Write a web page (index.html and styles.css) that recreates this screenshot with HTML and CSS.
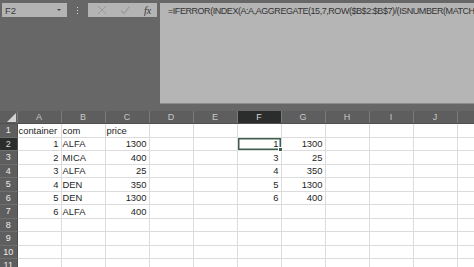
FILE: index.html
```html
<!DOCTYPE html>
<html lang="en">
<head>
<meta charset="UTF-8" />
<title>Sheet</title>
<link rel="stylesheet" href="styles.css">
</head>
<body>
  <div class="formula-area">
    <div class="name-box">
      <span>F2</span>
      <span class="drop"></span>
    </div>
    <div class="grip"><i></i><i></i><i></i></div>
    <div class="fx-box">
      <svg width="10" height="10" viewBox="0 0 10 10"><path d="M1 1 L9 9 M9 1 L1 9" stroke="#999" stroke-width="1" fill="none"/></svg>
      <svg width="10" height="10" viewBox="0 0 10 10"><path d="M1 5.5 L4 8.5 L9.5 1.5" stroke="#999" stroke-width="1.2" fill="none"/></svg>
      <span class="fx">fx</span>
    </div>
    <div class="formula-box">=IFERROR(INDEX(A:A,AGGREGATE(15,7,ROW($B$2:$B$7)/(ISNUMBER(MATCH</div>
  </div>

  <table class="sheet">
    <colgroup>
      <col class="c-row"><col><col><col><col><col><col><col><col><col><col><col>
    </colgroup>
    <tr class="col-heads">
      <th class="corner"><span class="tri"></span></th>
      <th>A</th><th>B</th><th>C</th><th>D</th><th>E</th><th class="sel">F</th><th>G</th><th>H</th><th>I</th><th>J</th><th></th>
    </tr>
    <tr>
      <th>1</th>
      <td>container</td><td>com</td><td>price</td><td></td><td></td><td></td><td></td><td></td><td></td><td></td><td></td>
    </tr>
    <tr>
      <th class="sel">2</th>
      <td class="num">1</td><td>ALFA</td><td class="num">1300</td><td></td><td></td><td class="num active">1<span class="handle"></span></td><td class="num">1300</td><td></td><td></td><td></td><td></td>
    </tr>
    <tr>
      <th>3</th>
      <td class="num">2</td><td>MICA</td><td class="num">400</td><td></td><td></td><td class="num">3</td><td class="num">25</td><td></td><td></td><td></td><td></td>
    </tr>
    <tr>
      <th>4</th>
      <td class="num">3</td><td>ALFA</td><td class="num">25</td><td></td><td></td><td class="num">4</td><td class="num">350</td><td></td><td></td><td></td><td></td>
    </tr>
    <tr>
      <th>5</th>
      <td class="num">4</td><td>DEN</td><td class="num">350</td><td></td><td></td><td class="num">5</td><td class="num">1300</td><td></td><td></td><td></td><td></td>
    </tr>
    <tr>
      <th>6</th>
      <td class="num">5</td><td>DEN</td><td class="num">1300</td><td></td><td></td><td class="num">6</td><td class="num">400</td><td></td><td></td><td></td><td></td>
    </tr>
    <tr>
      <th>7</th>
      <td class="num">6</td><td>ALFA</td><td class="num">400</td><td></td><td></td><td></td><td></td><td></td><td></td><td></td><td></td>
    </tr>
    <tr>
      <th>8</th>
      <td></td><td></td><td></td><td></td><td></td><td></td><td></td><td></td><td></td><td></td><td></td>
    </tr>
    <tr>
      <th>9</th>
      <td></td><td></td><td></td><td></td><td></td><td></td><td></td><td></td><td></td><td></td><td></td>
    </tr>
    <tr>
      <th>10</th>
      <td></td><td></td><td></td><td></td><td></td><td></td><td></td><td></td><td></td><td></td><td></td>
    </tr>
    <tr>
      <th>11</th>
      <td></td><td></td><td></td><td></td><td></td><td></td><td></td><td></td><td></td><td></td><td></td>
    </tr>
    <tr>
      <th>12</th>
      <td></td><td></td><td></td><td></td><td></td><td></td><td></td><td class="paste-cell"><span class="paste"></span></td><td></td><td></td><td></td>
    </tr>
  </table>
</body>
</html>
```

FILE: styles.css
```css
body {
  margin: 0;
  background: #676767;
  font-family: "Liberation Sans", Arial, sans-serif;
  overflow: hidden;
  height: 267px;
}

/* formula bar */
.formula-area {
  display: flex;
  align-items: flex-start;
  padding: 3px 0 0 2px;
  height: 106px;
  box-sizing: border-box;
}
.name-box {
  width: 65px;
  height: 14px;
  background: #b4b4b4;
  display: flex;
  align-items: center;
  justify-content: space-between;
  padding: 0 6px 0 3px;
  box-sizing: border-box;
  font-size: 9.5px;
  color: #3a3a3a;
}
.drop {
  width: 0;
  height: 0;
  border-left: 2px solid transparent;
  border-right: 2px solid transparent;
  border-top: 2px solid #444;
}
.grip {
  width: 21px;
  height: 14px;
  display: flex;
  flex-direction: column;
  align-items: center;
  justify-content: center;
  gap: 2px;
}
.grip i {
  width: 1px;
  height: 1px;
  background: #d8d8d8;
}
.fx-box {
  width: 69px;
  height: 14px;
  background: #b4b4b4;
  display: flex;
  align-items: center;
  padding: 0 0 0 9px;
  gap: 13px;
  box-sizing: border-box;
}
.fx {
  font-family: "Liberation Serif", serif;
  font-style: italic;
  font-size: 10px;
  color: #333;
  margin-left: 1px;
}
.formula-box {
  margin-left: 3px;
  flex: 1;
  height: 101px;
  background: #b5b5b5;
  border-bottom: 1px solid #8c8c8c;
  box-sizing: border-box;
  padding: 3px 0 0 8px;
  font-size: 9px;
  letter-spacing: -0.45px;
  color: #333;
  white-space: nowrap;
  overflow: hidden;
}

/* grid */
.sheet {
  margin-top: 5px;
  border-collapse: collapse;
  table-layout: fixed;
  width: 501px;
  font-size: 9.4px;
  color: #1e1e1e;
}
.sheet col {
  width: 44px;
}
.sheet col.c-row {
  width: 17px;
}
.sheet th {
  background: #5e5e5e;
  color: #ececec;
  font-weight: normal;
  font-size: 9px;
  padding: 0;
  text-align: center;
  border-right: 1px solid #4e4e4e;
  border-bottom: 1px solid #6e6e6e;
}
.col-heads th {
  height: 12px;
  color: #c8c8c8;
  border-right: 1px solid #7a7a7a;
  border-bottom: 1px solid #505050;
}
.sheet th.sel {
  background: #2a2d2b;
  color: #d8d8d8;
}
.corner {
  position: relative;
}
.tri {
  position: absolute;
  right: 1px;
  bottom: 1px;
  width: 0;
  height: 0;
  border-left: 9px solid transparent;
  border-bottom: 9px solid #d2d2d2;
}
.sheet td {
  height: 12.5px;
  padding: 0 2px 0 1px;
  background: #fff;
  border-right: 1px solid #dcdcdc;
  border-bottom: 1px solid #dcdcdc;
  white-space: nowrap;
  overflow: hidden;
  line-height: 11px;
}
.sheet td.num {
  text-align: right;
}
.sheet td.active {
  position: relative;
  box-shadow: inset 0 0 0 1.5px #3f5e4d;
  overflow: visible;
}
.handle {
  position: absolute;
  right: -2px;
  bottom: -2px;
  width: 3px;
  height: 3px;
  background: #3f5e4d;
  border: 1px solid #fff;
}
.paste-cell {
  position: relative;
  overflow: visible;
}
.paste {
  position: absolute;
  left: 0;
  top: 1px;
  width: 12px;
  height: 6px;
  background: #c9d3e6;
  border: 1px solid #9aa8c4;
}
```
